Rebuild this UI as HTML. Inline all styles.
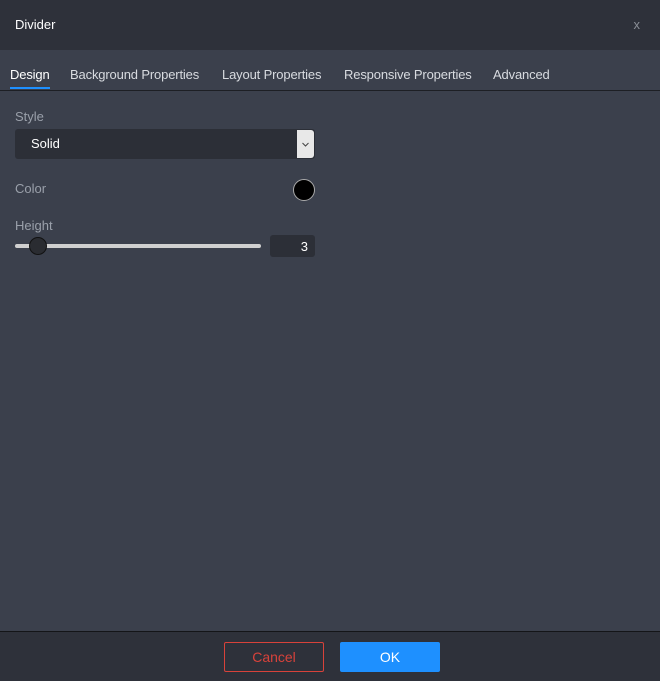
<!DOCTYPE html>
<html><head><style>
*{margin:0;padding:0;box-sizing:border-box}
body{width:660px;height:681px;background:#3b404c;font-family:"Liberation Sans",sans-serif;font-size:13px;position:relative;overflow:hidden}
.hdr{position:absolute;left:0;top:0;width:660px;height:50px;background:#2e313a;color:#fff}
.hdr .t{position:absolute;left:15px;top:17px}
.hdr .x{position:absolute;right:20px;top:17px;color:#8a8e96}
.tabs{position:absolute;top:50px;left:0;width:660px;height:41px;border-bottom:1px solid #1d1f24}
.tab{position:absolute;top:17px;color:#d8dbe0;letter-spacing:-0.15px}
.tab.a{color:#fff}
.ul{position:absolute;left:10px;top:87px;width:40px;height:2px;background:#1e90ff}
.lbl{position:absolute;left:15px;color:#9aa0aa}
.sel{position:absolute;left:15px;top:129px;width:300px;height:30px;background:#2c2f37;border-radius:3px;color:#fff}
.sel span{position:absolute;left:16px;top:7px}
.sel .ar{position:absolute;right:1px;top:1px;width:17px;height:28px;background:#e8e8e8;border-radius:0 3px 3px 0}
.dot{position:absolute;left:293px;top:179px;width:22px;height:22px;border-radius:50%;background:#000;border:1px solid #aaa}
.track{position:absolute;left:15px;top:244px;width:246px;height:4px;background:#d0d0d0;border-radius:2px}
.knob{position:absolute;left:29px;top:237px;width:18px;height:18px;border-radius:50%;background:#2a2c31;border:1px solid #111}
.num{position:absolute;left:270px;top:235px;width:45px;height:22px;background:#2c2f37;border-radius:3px;color:#fff;text-align:right;padding:4px 7px 0 0}
.ftr{position:absolute;left:0;top:631px;width:660px;height:50px;background:#2e313a;border-top:1px solid #141518}
.btn{position:absolute;top:10px;width:100px;height:30px;text-align:center;line-height:29px;font-size:14px}
.c{left:224px;border:1px solid #d8423a;color:#d8423a;border-radius:2px}
.o{left:340px;background:#1e90ff;color:#fff;border-radius:2px;line-height:30px}
</style></head><body>
<div class="hdr"><span class="t">Divider</span><span class="x">x</span></div>
<div class="tabs">
<span class="tab a" style="left:10px">Design</span>
<span class="tab" style="left:70px">Background Properties</span>
<span class="tab" style="left:222px">Layout Properties</span>
<span class="tab" style="left:344px">Responsive Properties</span>
<span class="tab" style="left:493px">Advanced</span>
</div>
<div class="ul"></div>
<div class="lbl" style="top:109px">Style</div>
<div class="sel"><span>Solid</span><div class="ar"><svg width="17" height="28"><path d="M5.5 13l3 3 3-3" stroke="#444" fill="none"/></svg></div></div>
<div class="lbl" style="top:181px">Color</div>
<div class="dot"></div>
<div class="lbl" style="top:218px">Height</div>
<div class="track"></div>
<div class="knob"></div>
<div class="num">3</div>
<div class="ftr"><div class="btn c">Cancel</div><div class="btn o">OK</div></div>
</body></html>
